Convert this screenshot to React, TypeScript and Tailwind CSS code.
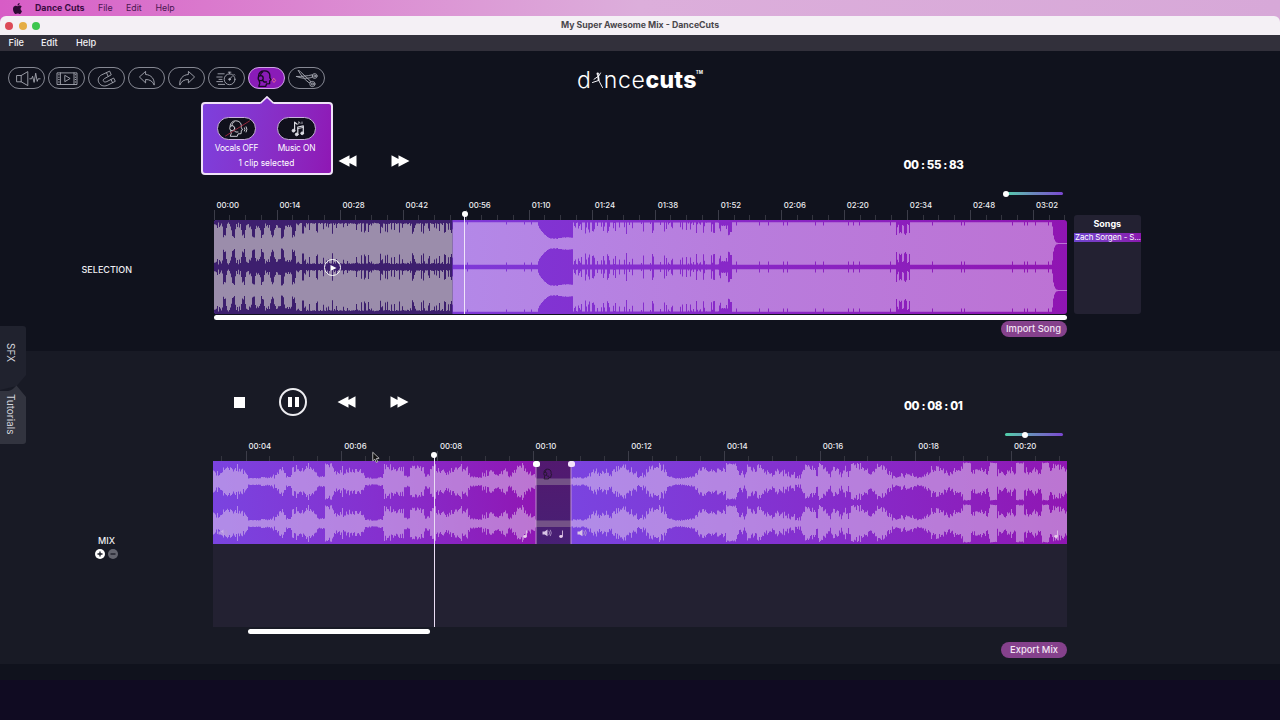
import type { ReactNode } from "react";

// ------------------------------------------------------------------
// Waveform data
// ------------------------------------------------------------------
type Point = [x: number, amp: number];

// x in px from the left edge of the track, amp is half the height of one channel
const mixEnvelope: Point[] = [
  [0, 10], [8, 6], [12, 12], [18, 13], [25, 12], [32, 9], [35, 3.5], [58, 4], [63, 7], [69, 15],
  [72, 6], [77, 4], [79, 12], [84, 12], [89, 9], [92, 11], [98, 15], [102, 9], [104, 5], [111, 5],
  [112, 17], [117, 16], [122, 10], [129, 10], [131, 8], [134, 11], [145, 12], [149, 9], [152, 4],
  [160, 3], [169, 4], [171, 16], [177, 12], [184, 12], [189, 13], [192, 5], [196, 5], [197, 13],
  [204, 15], [210, 12], [212, 6], [216, 6], [217, 15], [226, 11], [235, 8], [239, 12], [247, 14],
  [254, 11], [257, 5], [267, 4], [272, 7], [277, 10], [282, 8], [287, 8], [291, 12], [296, 6],
  [300, 7], [303, 14], [309, 15], [314, 9], [320, 6], [323, 3.5], [372, 3.5], [375, 5], [382, 12],
  [386, 8], [391, 9], [396, 6], [401, 11], [407, 15], [411, 16], [415, 10], [422, 8], [427, 5],
  [432, 8], [436, 13], [444, 15], [451, 12], [454, 5], [467, 3], [481, 5], [485, 10], [489, 13],
  [494, 11], [497, 8], [502, 12], [509, 9], [512, 12], [514, 17], [522, 17], [525, 9], [532, 6],
  [534, 17], [540, 12], [547, 12], [554, 9], [560, 7], [563, 12], [569, 9], [574, 5], [588, 6],
  [592, 16], [599, 14], [604, 7], [606, 18], [612, 11], [617, 7], [620, 13], [625, 12], [628, 5],
  [632, 14], [635, 5], [638, 17], [646, 15], [652, 12], [659, 9], [664, 14], [670, 15], [677, 7],
  [684, 4], [695, 7], [704, 4], [710, 5], [719, 11], [724, 14], [730, 10], [735, 8], [743, 12],
  [747, 8], [750, 18], [757, 18], [758, 10], [770, 12], [775, 9], [777, 18], [783, 18], [784, 8],
  [793, 9], [802, 9], [803, 18], [810, 18], [811, 8], [820, 12], [827, 9], [829, 18], [835, 18],
  [837, 11], [845, 15], [854, 12],
];

function noise(i: number) {
  const n = Math.sin(i * 127.1 + 11.7) * 43758.5453;
  return n - Math.floor(n);
}

function sample(points: Point[], x: number) {
  for (let i = 1; i < points.length; i++) {
    const [x0, a0] = points[i - 1];
    const [x1, a1] = points[i];
    if (x <= x1) return a0 + ((x - x0) / (x1 - x0 || 1)) * (a1 - a0);
  }
  return points[points.length - 1][1];
}

function mixAmp(x: number) {
  const base = sample(mixEnvelope, x);
  if (base > 16.5) return base + noise(x);
  const n = noise(x);
  if (base <= 5) return base + (n - 0.5) * 1.6;
  const spike = noise(x + 300) > 0.86 ? 3 : 0;
  return Math.min(18.6, base + (n - 0.55) * 5.6 + spike);
}

// The song is loud almost everywhere, so it is described by the dips
const beatDips = [10, 19, 29, 39, 48, 58, 68, 79];

function songAmp(x: number) {
  const n = noise(x);
  if (x < 82) {
    const near = Math.min(...beatDips.map((d) => Math.abs(d - x)));
    return near < 1.2 ? 5 + n * 4 : near < 2.6 ? 12 + n * 5 : 15 + n * 6;
  }
  if (x < 236) return n > 0.58 ? 20.5 - Math.pow(noise(x + 900), 1.6) * 12 : 19.5 + n * 2;
  if (x < 239) return 9 + n * 5;
  if (x < 324) return n > 0.94 ? 19 : 21.2;
  if (x < 359) {
    const t = Math.min(1, (x - 323) / 15);
    return 4.6 + 14 * Math.pow(1 - t, 2) + n + (x > 346 ? 1 : 0);
  }
  if (x < 508) return n > 0.6 ? 21 - Math.pow(noise(x + 500), 1.4) * 11.5 : 21;
  if (x < 518) return x > 513 ? 8 + n * 4 : 14 + n * 5;
  if (x < 682) return n > 0.92 ? 17 + n : 21.2;
  if (x < 696) return x % 5 < 2.5 ? 8 + n * 4 : 16 + n * 4;
  if (x < 838) return n > 0.93 ? 18 : 21.2;
  if (x < 844) return [17, 8, 4, 2, 1, 0.7][x - 838];
  return 0.4;
}

function wavePath(width: number, center: number, amp: (x: number) => number) {
  let top = "";
  let bottom = "";
  for (let x = 0; x < width; x += 1) {
    const a = amp(x);
    top += `L${x} ${(center - a).toFixed(1)}H${x + 1}`;
    bottom = `L${x + 1} ${(center + a).toFixed(1)}H${x}${bottom}`;
  }
  return `M0 ${center}${top}${bottom}Z`;
}

// ------------------------------------------------------------------
// Icons
// ------------------------------------------------------------------
function ToolIcon({ children }: { children: ReactNode }) {
  return (
    <svg
      viewBox="0 0 36 21"
      className="h-[21px] w-9 shrink-0"
      fill="none"
      stroke="currentColor"
      strokeWidth="0.9"
      strokeLinejoin="round"
      strokeLinecap="round"
    >
      {children}
    </svg>
  );
}

function VolumeIcon() {
  return (
    <ToolIcon>
      <path d="M8 7.5h4.2L18.8 3.6v14L12.2 13.8H8ZM12.2 7.5v6.3" />
      <path d="M20.8 10.8h1.8l1-2.6 1.5 6.2 1.6-9.2 1.5 8.2.9-2.6h2" />
    </ToolIcon>
  );
}

function FilmIcon() {
  return (
    <ToolIcon>
      <path d="M8.400 4.900h19.600v11.600H8.400ZM11.400 4.900v11.600M25 4.900v11.600M15.800 7.700v6l5-3Z" />
      <path d="M9.900 6.300v9.600M26.500 6.300v9.600" strokeDasharray="1 1.4" strokeLinecap="butt" strokeWidth="1.3" />
    </ToolIcon>
  );
}

function MagnetIcon() {
  return (
    <ToolIcon>
      <path d="M20.3 3.300 12.600 6.900C9.500 8.500 8.500 11.500 9.700 14.200c1.400 3.300 5 4.600 8.600 3.200l8-4.100-1.600-3.200-6.900 3.500c-1.500.7-2.900.5-3.400-.5-.5-1.100.1-2 1.300-2.600L21.900 7ZM17.500 4.700l1.600 3.600M22 11.500l1.600 3.200" />
    </ToolIcon>
  );
}

function UndoIcon() {
  return (
    <ToolIcon>
      <path d="M10.700 8.700 16.600 3.400v3.100c5.600.3 9.200 4.400 8.600 10.600-1.500-3.800-4.400-5.700-8.600-5.600v3Z" />
    </ToolIcon>
  );
}

function RedoIcon() {
  return (
    <ToolIcon>
      <path d="M25.300 8.700 19.400 3.400v3.100c-5.600.3-9.200 4.400-8.600 10.600 1.500-3.800 4.400-5.700 8.600-5.600v3Z" />
    </ToolIcon>
  );
}

function TempoIcon() {
  return (
    <ToolIcon>
      <circle cx="20.6" cy="11.3" r="5.4" />
      <circle cx="20.6" cy="11.3" r="0.9" fill="currentColor" />
      <path d="M19.300 4.200h2.600M20.600 4.200v1.600M24.800 6.200l.9.9M21.200 10.500l1.800-2" />
      <path d="M9 5.800h6.200M7.800 9h5.400M10 11.400h3M7.800 13.600h5.800M9.400 16.400h6.200" />
    </ToolIcon>
  );
}

// Head in profile, facing right, with a headphone over the ear
function HeadShape() {
  return (
    <>
      <path d="M11 8.200C11.300 4.800 13.700 2.800 16.800 2.800c3.400 0 5.600 2.200 5.600 5.300l-.1 1.500 1.200 2.300-1.200.6-.2 3.200-3.100.2-.7 2.400h-7l1-3.100-.6-2.300" />
      <circle cx="13.2" cy="10.2" r="2.5" />
      <path d="M13 7.600c0-1.600.8-3 2.200-3.700M15 12.300l1.600 1.700h2.400" />
    </>
  );
}

function ScissorsIcon() {
  return (
    <ToolIcon>
      <path d="M9.400 2.700c.8-.2 1.500.3 2 1l10.400 9.700-1.600 1.500C16 11.700 11.600 7.400 9.400 2.700Z" />
      <path d="M7.500 8.500c4.800 1.900 9.300 2.300 13.700 1.300l2.600-1-.5-2C18.400 8 13 8.500 7.500 8.500Z" />
      <circle cx="25.7" cy="8" r="2.4" />
      <circle cx="25.7" cy="8" r="0.9" />
      <circle cx="23.4" cy="16" r="2.600" />
      <circle cx="23.4" cy="16" r="1" />
    </ToolIcon>
  );
}

function AppleLogo() {
  return (
    <svg viewBox="0 0 24 24" className="h-[11px] w-[11px]" fill="#2c0a33">
      <path d="M12.200 6.900c-.9 0-2.400-1.100-4-1-2 0-3.900 1.200-5 3-2.100 3.700-.5 9.100 1.500 12.100 1 1.500 2.200 3.100 3.800 3 1.500-.1 2.100-1 3.900-1s2.400 1 4 .9c1.600 0 2.700-1.500 3.700-2.900 1.200-1.700 1.600-3.300 1.700-3.400 0 0-3.200-1.200-3.200-4.900 0-3.100 2.500-4.500 2.600-4.600-1.400-2.100-3.600-2.300-4.400-2.400-2-.2-3.700 1.200-4.600 1.200ZM15.500 3.800c.8-1 1.400-2.400 1.200-3.800-1.200 0-2.700.8-3.500 1.800-.8.9-1.500 2.300-1.300 3.700 1.300.1 2.700-.7 3.600-1.700Z" />
    </svg>
  );
}

function MiniSpeaker() {
  return (
    <svg viewBox="0 0 10 8" className="h-2 w-2.5" fill="#d8c4e6">
      <path d="M.5 2.600h2.200L5.500.6v6.600L2.700 5.400H.5Z" />
      <path d="M6.800 1.800q1.500 2.100 0 4.300M8.200.8q2.200 3.100 0 6.300" fill="none" stroke="#b79fcb" strokeWidth=".8" />
    </svg>
  );
}

function MiniNote() {
  return (
    <svg viewBox="0 0 8 10" className="h-2.5 w-2" fill="#e6cdea">
      <ellipse cx="3" cy="7.5" rx="1.8" ry="1.4" />
      <path d="M4.100 1.500h.8v6h-.8Z" />
    </svg>
  );
}

// ------------------------------------------------------------------
// Toolbar
// ------------------------------------------------------------------
function ToolButton({ active = false, children }: { active?: boolean; children: ReactNode }) {
  return (
    <button
      className={
        active
          ? "flex h-[22px] w-[37px] items-center justify-center rounded-full border border-[#cfa6e6] bg-[#8a1bb8] text-[#140a20]"
          : "flex h-[22px] w-[37px] items-center justify-center rounded-full border border-[#868893] text-[#a6a8b2]"
      }
    >
      {children}
    </button>
  );
}

function StemToggle({ label, children }: { label: string; children: ReactNode }) {
  return (
    <div className="flex w-[60px] flex-col items-center">
      <div className="flex h-[23px] w-[39px] items-center justify-center rounded-full border border-[#c9b2dc] bg-[#10101c] text-[#dcdce4]">
        {children}
      </div>
      <span className="mt-[3px] text-[8.4px] leading-[10px] tracking-[-0.15px] whitespace-nowrap">{label}</span>
    </div>
  );
}

function VocalsPopover() {
  return (
    <div className="absolute top-[35px] left-1/2 z-20 w-[132px] -translate-x-1/2">
      <div className="flex h-[73px] flex-col items-center rounded-[4px] border-2 border-[#f0e2f8] bg-linear-100 from-[#7d40dd] to-[#8f17b4] pt-[13px] text-white">
        <div className="flex">
          <StemToggle label="Vocals OFF">
            <ToolIcon>
              <HeadShape />
              <path d="M25.500 9.800q1 1.600 0 3.200M27.200 8.800q1.600 2.600 0 5.200" />
              <path d="M6.500 18 30.500 3" stroke="#a3283e" />
            </ToolIcon>
          </StemToggle>
          <StemToggle label="Music ON">
            <ToolIcon>
              <path d="M15.600 12.300V4.200l2.600 2M18.800 16V9l5.500-1.200v7" strokeWidth="1.200" />
              <path d="M18.800 10.600l5.500-1.200" />
              <circle cx="14.500" cy="12.700" r="1.400" fill="currentColor" />
              <circle cx="17.700" cy="16.400" r="1.400" fill="currentColor" />
              <circle cx="23.200" cy="15.300" r="1.400" fill="currentColor" />
              <path d="M19.800 6V3.600l1.600 1.600M23 5.600V4" strokeWidth=".7" />
            </ToolIcon>
          </StemToggle>
        </div>
        <span className="mt-[5px] text-[8.4px] leading-[10px]">1 clip selected</span>
      </div>
      <svg viewBox="0 0 14 8" className="absolute -top-[6px] left-[59px] h-2 w-3.5">
        <path d="M0 8 7 1l7 7Z" fill="#8530cd" />
        <path d="M.5 7.200 7 .9l6.500 6.300" fill="none" stroke="#f0e2f8" strokeWidth="1.600" />
      </svg>
    </div>
  );
}

function Logo() {
  return (
    <div className="flex h-6 items-center pt-px text-[23px] leading-6 text-white">
      <span className="font-light">d</span>
      <svg viewBox="0 0 12 18" className="h-[18px] w-[13px]" fill="none" stroke="#f4f4f8" strokeLinecap="round">
        <circle cx="6.2" cy="2.7" r="1.2" fill="#f4f4f8" stroke="none" />
        <path d="M6.600 4.500 7.200 9.200" strokeWidth="1.8" />
        <path d="M7 9 11 16.500M7 9.500 1 11.500M6.500 5.500 2.500 8.300M7 5.500 9 2" strokeWidth="1" />
      </svg>
      <span className="font-light tracking-[0.6px]">nce</span>
      <span className="font-extrabold tracking-[0.3px]">cuts</span>
      <span className="-mt-3 -ml-px text-[4.5px] leading-none font-bold">TM</span>
    </div>
  );
}

function Toolbar() {
  return (
    <div className="flex h-[59px] items-start pt-4 pl-2">
      <div className="flex w-[569px] gap-[3px]">
        <ToolButton><VolumeIcon /></ToolButton>
        <ToolButton><FilmIcon /></ToolButton>
        <ToolButton><MagnetIcon /></ToolButton>
        <ToolButton><UndoIcon /></ToolButton>
        <ToolButton><RedoIcon /></ToolButton>
        <ToolButton><TempoIcon /></ToolButton>
        <div className="relative">
          <ToolButton active>
            <ToolIcon>
              <g transform="translate(-1.500 0)" strokeWidth="1.300"><HeadShape /></g>
              <path d="m25 10.500 1.600 2-1.600 2-1.600-2Z" stroke="#ee6a90" />
            </ToolIcon>
          </ToolButton>
          <VocalsPopover />
        </div>
        <ToolButton><ScissorsIcon /></ToolButton>
      </div>
      <Logo />
    </div>
  );
}

// ------------------------------------------------------------------
// Deck pieces
// ------------------------------------------------------------------
function Transport() {
  return (
    <div className="flex h-7 items-center pl-[21px] text-white">
      <span className="h-[11px] w-[11px] bg-white" />
      <span className="ml-[34px] flex h-7 w-7 items-center justify-center gap-[3px] rounded-full border-2 border-[#ececf0]">
        <span className="h-[10px] w-[4px] bg-white" />
        <span className="h-[10px] w-[4px] bg-white" />
      </span>
      <svg viewBox="0 0 18 12" className="ml-[30px] h-3 w-[19px]" fill="currentColor">
        <path d="M0 6 11 .200V4l7-3.800v11.600L11 8v3.800Z" />
      </svg>
      <svg viewBox="0 0 18 12" className="ml-[34px] h-3 w-[19px]" fill="currentColor">
        <path d="M18 6 7 .200V4L0 .200v11.600L7 8v3.800Z" />
      </svg>
    </div>
  );
}

function DeckHeader({ time, zoom }: { time: string; zoom: number }) {
  return (
    <div className="flex h-[90px] justify-between pt-[37px]">
      <Transport />
      <div className="flex w-[163px] flex-col">
        <span className="pt-[11px] text-[11.5px] leading-[14px] font-extrabold tracking-[-0.35px] whitespace-nowrap text-white">
          {time}
        </span>
        <div className="relative mt-5 ml-[101px] h-[3px] w-[58px] rounded-full bg-linear-to-r from-[#4fcfa9] via-[#6a86bd] to-[#7a45d2]">
          <span className="absolute -top-[1.5px] h-1.5 w-1.5 -translate-x-1/2 rounded-full bg-white" style={{ left: zoom }} />
        </div>
      </div>
    </div>
  );
}

function RulerCell({ label, className }: { label: string; className: string }) {
  return (
    <div className={className}>
      <div className="h-[10px] pl-[3px] text-[7.8px] leading-[10px] font-medium whitespace-nowrap text-[#eeeef2]">{label}</div>
      <div className="grid h-[10px] grid-cols-4 items-end">
        <span className="h-[10px] border-l border-[#3c3d49]" />
        <span className="h-[5px] border-l border-[#34353f]" />
        <span className="h-[5px] border-l border-[#34353f]" />
        <span className="h-[5px] border-l border-[#34353f]" />
      </div>
    </div>
  );
}

const songTimes = [
  "00:00", "00:14", "00:28", "00:42", "00:56", "01:10", "01:24",
  "01:38", "01:52", "02:06", "02:20", "02:34", "02:48", "03:02",
];

const mixTimes = ["00:04", "00:06", "00:08", "00:10", "00:12", "00:14", "00:16", "00:18", "00:20"];

function SongWave() {
  return (
    <svg viewBox="0 0 853 94" className="block h-[94px] w-[853px] rounded-[3px]">
      <defs>
        <linearGradient id="song-bg" x1="0" y1="0" x2="1" y2="0">
          <stop offset="0%" stopColor="#7b43e2" />
          <stop offset="28%" stopColor="#7e39d8" />
          <stop offset="60%" stopColor="#8828c8" />
          <stop offset="100%" stopColor="#9015b2" />
        </linearGradient>
        <linearGradient id="song-fg" x1="0" y1="0" x2="1" y2="0">
          <stop offset="0%" stopColor="#b48eea" />
          <stop offset="28%" stopColor="#b388e8" />
          <stop offset="60%" stopColor="#b87ddd" />
          <stop offset="100%" stopColor="#bd72d4" />
        </linearGradient>
        <clipPath id="trimmed"><rect x="0" y="0" width="238.5" height="94" /></clipPath>
      </defs>
      <rect width="853" height="94" fill="url(#song-bg)" />
      <g fill="url(#song-fg)">
        <path d={wavePath(853, 23.5, songAmp)} />
        <path d={wavePath(853, 70.5, songAmp)} />
      </g>
      <g clipPath="url(#trimmed)">
        <rect width="239" height="94" fill="#3d1f6e" />
        <path d={wavePath(239, 23.5, songAmp)} fill="#9b8dab" />
        <path d={wavePath(239, 70.5, songAmp)} fill="#9b8dab" />
      </g>
    </svg>
  );
}

function MixWave() {
  return (
    <svg viewBox="0 0 854 83" className="block h-[83px] w-[854px]">
      <defs>
        <linearGradient id="clip-a" gradientUnits="userSpaceOnUse" x1="0" y1="60" x2="322" y2="20">
          <stop offset="0%" stopColor="#7a44e0" />
          <stop offset="50%" stopColor="#8530cf" />
          <stop offset="100%" stopColor="#9016b3" />
        </linearGradient>
        <linearGradient id="clip-b" gradientUnits="userSpaceOnUse" x1="358" y1="60" x2="854" y2="20">
          <stop offset="0%" stopColor="#7a44e0" />
          <stop offset="50%" stopColor="#852ecd" />
          <stop offset="100%" stopColor="#9016b3" />
        </linearGradient>
        <linearGradient id="cut" x1="0" y1="0" x2="0" y2="1">
          <stop offset="0%" stopColor="#52196f" />
          <stop offset="100%" stopColor="#472074" />
        </linearGradient>
      </defs>
      <rect width="323" height="83" fill="url(#clip-a)" />
      <rect x="358" width="496" height="83" fill="url(#clip-b)" />
      <g fill="#e8d4f0" fillOpacity="0.5">
        <path d={wavePath(854, 20.5, mixAmp)} />
        <path d={wavePath(854, 62.5, mixAmp)} />
      </g>
      <rect x="323" width="35" height="83" fill="url(#cut)" />
      <path d="M323 17.500H358V24H323ZM323 59.500H358V66H323Z" fill="#745287" />
      <path d="M323 0V83M358 0V83" stroke="#c79bd3" strokeWidth="0.9" />
    </svg>
  );
}

function PillButton({ children }: { children: ReactNode }) {
  return (
    <button className="flex h-4 w-[66px] items-center justify-center rounded-full bg-[#85418c] text-[9.4px] leading-none font-medium whitespace-nowrap text-[#f3e6f5]">
      {children}
    </button>
  );
}

function SelectionDeck() {
  return (
    <section className="flex h-[241px]">
      <div className="flex w-[213.5px] justify-center pt-[154px] text-[9px] leading-[11px] font-medium text-[#eeeef2]">SELECTION</div>
      <div className="w-[853px]">
        <DeckHeader time="00 : 55 : 83" zoom={1.5} />
        <div className="flex h-5 overflow-hidden">
          {songTimes.map((t) => (
            <RulerCell key={t} label={t} className="w-[63.04px] shrink-0" />
          ))}
        </div>
        <div className="relative">
          <SongWave />
          {/* preview button on the trimmed part */}
          <span className="absolute top-[39px] left-[110.5px] flex h-[17px] w-[17px] items-center justify-center rounded-full border border-white">
            <svg viewBox="0 0 8 8" className="h-2 w-2" fill="#fff"><path d="M1.500 1 7.500 4l-6 3Z" /></svg>
          </span>
          <span className="absolute -top-[6px] left-[250.5px] h-[100px] w-px bg-[#efe4fa]" />
          <span className="absolute -top-[9px] left-[248px] h-1.5 w-1.5 rounded-full bg-white" />
        </div>
        <div className="mt-px h-[5px] rounded-full bg-white" />
        <div className="mt-px flex justify-end">
          <PillButton>Import Song</PillButton>
        </div>
      </div>
      <aside className="mt-[105px] ml-[7.5px] h-[99px] w-[66.5px] rounded-[3px] bg-[#232132] text-white">
        <h2 className="h-[17.5px] pt-[3px] text-center text-[9px] leading-[11px] font-bold">Songs</h2>
        <p className="h-[9px] bg-linear-to-r from-[#6e45cf] to-[#8a17ae] pl-px text-[8px] leading-[9px] tracking-[-0.15px] whitespace-nowrap">
          Zach Sorgen - S...
        </p>
      </aside>
    </section>
  );
}

function MixDeck() {
  return (
    <section className="flex h-[313px] bg-[#181a25]">
      <div className="flex w-[213px] flex-col items-center pt-[184px] text-[9px] leading-[11px] font-medium text-[#eeeef2]">
        MIX
        <div className="mt-[2.5px] flex gap-[3.5px]">
          <svg viewBox="0 0 10 10" className="h-2.5 w-2.5">
            <circle cx="5" cy="5" r="5" fill="#fff" />
            <path d="M5 2.500v5M2.500 5h5" stroke="#181a25" strokeWidth="1.3" />
          </svg>
          <svg viewBox="0 0 10 10" className="h-2.5 w-2.5">
            <circle cx="5" cy="5" r="5" fill="#63646e" />
            <path d="M2.500 5h5" stroke="#181a25" strokeWidth="1.3" />
          </svg>
        </div>
      </div>
      <div className="w-[854px]">
        <DeckHeader time="00 : 08 : 01" zoom={19.5} />
        <div className="flex h-5 overflow-hidden">
          <div className="flex w-[32.5px] shrink-0 items-end pl-2">
            <span className="h-[5px] border-l border-[#34353f]" />
          </div>
          {mixTimes.map((t) => (
            <RulerCell key={t} label={t} className="w-[95.7px] shrink-0" />
          ))}
        </div>
        <div className="relative h-[166px] bg-[#232132]">
          <MixWave />
          <span className="absolute top-[68px] left-[5px] opacity-60"><MiniSpeaker /></span>
          <span className="absolute top-[68px] left-[309px]"><MiniNote /></span>
          <span className="absolute top-[68px] left-[329px]"><MiniSpeaker /></span>
          <span className="absolute top-[68px] left-[345px]"><MiniNote /></span>
          <span className="absolute top-[68px] left-[364px]"><MiniSpeaker /></span>
          <span className="absolute top-[68px] left-[840px]"><MiniNote /></span>
          <svg
            viewBox="9 1 17 19"
            className="absolute top-[7px] left-[329px] h-3 w-3"
            fill="none"
            stroke="#25152f"
            strokeWidth="1.5"
          >
            <HeadShape />
          </svg>
          {/* clip handles */}
          <span className="absolute top-0 left-[319.5px] h-1.5 w-[7px] rounded-[2.5px] bg-white" />
          <span className="absolute top-0 left-[354.5px] h-1.5 w-[7px] rounded-[2.5px] bg-[#f3e2fb]" />
          {/* playhead */}
          <span className="absolute -top-[6px] left-[221px] h-[172px] w-px bg-[#e9dcf4]" />
          <span className="absolute -top-[9px] left-[218px] h-1.5 w-1.5 rounded-full bg-white" />
          {/* mouse pointer */}
          <svg viewBox="0 0 12 16" className="absolute -top-[10px] left-[158.5px] h-[13px] w-[9px]">
            <path d="M1 1v11.500l2.800-2.300 1.900 4.300 2-.9-1.900-4.200 3.700-.3Z" fill="#111" stroke="#ddd" />
          </svg>
        </div>
        <div className="mt-[2px] ml-[35px] h-[5px] w-[182px] rounded-full bg-white" />
        <div className="mt-2 flex justify-end">
          <PillButton>Export Mix</PillButton>
        </div>
      </div>
    </section>
  );
}

function SideTabs() {
  return (
    <div className="absolute top-[326px] left-0 z-10 h-[118px] w-[26px]">
      <svg viewBox="0 0 26 118" className="absolute inset-0 h-full w-full">
        <path d="M0 0h23a3 3 0 0 1 3 3v46L16.500 60 0 64Z" fill="#20222e" />
        <path d="M0 65h8q4-.5 8.500-5.500L26 71v44a3 3 0 0 1-3 3H0Z" fill="#32343f" />
      </svg>
      <div className="relative flex h-full w-[21px] flex-col items-center text-[10px] leading-3 text-[#d4d5dc]">
        <span className="mt-[17px] [writing-mode:vertical-rl]">SFX</span>
        <span className="absolute top-[68px] [writing-mode:vertical-rl]">Tutorials</span>
      </div>
    </div>
  );
}

// ------------------------------------------------------------------
// Main component
// ------------------------------------------------------------------
export default function App() {
  return (
    <div className="relative h-[720px] w-[1280px] overflow-hidden bg-[#100b22] font-['Inter',sans-serif]">
      <div className="bg-linear-to-r from-[#d75cc6] via-[#dcaedb] to-[#d7a8d8]">
        <header className="flex h-4 items-center pl-3 text-[8.8px] leading-none text-[#4a1650]">
          <AppleLogo />
          <span className="ml-3 w-[63px] font-bold text-[#3a0c42]">Dance Cuts</span>
          <span className="w-[28px]">File</span>
          <span className="w-[29.5px]">Edit</span>
          <span>Help</span>
        </header>
        <div className="relative flex h-[19px] items-center justify-center rounded-t-[6px] bg-[#f4f0f5]">
          <div className="absolute left-[5px] flex gap-[5.5px]">
            <span className="h-2 w-2 rounded-full bg-[#dc4a58]" />
            <span className="h-2 w-2 rounded-full bg-[#e5ad45]" />
            <span className="h-2 w-2 rounded-full bg-[#3ec64f]" />
          </div>
          <span className="text-[8.75px] leading-none font-bold text-[#4a474c]">My Super Awesome Mix - DanceCuts</span>
        </div>
      </div>
      <nav className="flex h-4 items-center bg-[#32303b] pl-[8.5px] text-[9.2px] leading-none font-medium text-[#f2f2f5]">
        <span className="w-[32.5px]">File</span>
        <span className="w-[35px]">Edit</span>
        <span>Help</span>
      </nav>
      <main className="h-[629px] bg-[#10121d]">
        <Toolbar />
        <SelectionDeck />
        <MixDeck />
      </main>
      <SideTabs />
    </div>
  );
}
